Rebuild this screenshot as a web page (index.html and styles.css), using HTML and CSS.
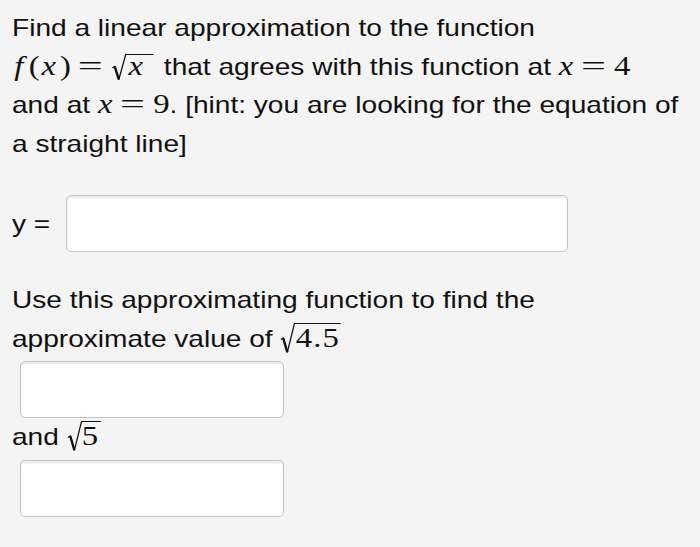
FILE: index.html
```html
<!DOCTYPE html>
<html>
<head>
<meta charset="utf-8">
<link rel="stylesheet" href="styles.css">
</head>
<body>
<div class="page">
  <p class="text q1">Find a linear approximation to the function<br>
    <span class="m"><i class="fn">f</i><span class="p">(</span><i>x</i><span class="p">)</span><span class="eq">=</span><span class="sqrt sq-small"><svg class="rad" width="13" height="27" viewBox="0 0 13 27"><path d="M0.8 15 L2.8 13.5 L6.3 26.5 L12.4 0.7" fill="none" stroke="#111" stroke-width="1.1"/><path d="M2.8 13.5 L6.3 26.5" stroke="#111" stroke-width="2"/></svg><span class="rc"><i>x</i></span></span></span> that agrees with this function at <span class="m"><i>x</i><span class="eq">=</span>4</span><br>
    and at <span class="m"><i>x</i><span class="eq">=</span>9</span>. [hint: you are looking for the equation of<br>
    a straight line]</p>

  <div class="row">
    <span class="text label">y =</span>
    <div class="box wide"></div>
  </div>

  <p class="text q2">Use this approximating function to find the<br>
    approximate value of <span class="m"><span class="sqrt"><svg class="rad" width="13" height="30" viewBox="0 0 13 30"><path d="M0.8 16.5 L2.8 15 L6.3 29.3 L12.4 0.7" fill="none" stroke="#111" stroke-width="1.1"/><path d="M2.8 15 L6.3 29.3" stroke="#111" stroke-width="2"/></svg><span class="rc">4.5</span></span></span></p>
  <div class="box small"></div>

  <p class="text q3">and <span class="m"><span class="sqrt"><svg class="rad" width="13" height="30" viewBox="0 0 13 30"><path d="M0.8 16.5 L2.8 15 L6.3 29.3 L12.4 0.7" fill="none" stroke="#111" stroke-width="1.1"/><path d="M2.8 15 L6.3 29.3" stroke="#111" stroke-width="2"/></svg><span class="rc">5</span></span></span></p>
  <div class="box small"></div>
</div>
</body>
</html>
```

FILE: styles.css
```css
html, body {
  margin: 0;
  padding: 0;
  background: #f4f4f4;
}

.page {
  padding: 9px 12px 0 12px;
  color: #111;
}

.text {
  font-family: "Liberation Sans", Arial, sans-serif;
  font-size: 24px;
  line-height: 38.5px;
  margin: 0;
  width: 580px;
  white-space: nowrap;
  transform: scaleX(1.17);
  transform-origin: 0 0;
}

.m {
  font-family: "Liberation Serif", "Times New Roman", serif;
  font-size: 28px;
  line-height: 1;
  white-space: nowrap;
}

.m i {
  font-style: italic;
  margin-right: 2px;
}

.m .fn {
  margin-left: 2px;
  margin-right: 3px;
}

.p {
  margin: 0 1.5px;
}

.eq {
  display: inline-block;
  transform: scaleX(1.35);
  margin: 0 10px 0 7px;
}

.sqrt {
  display: inline-block;
  white-space: nowrap;
}

.rad {
  display: inline-block;
  vertical-align: -6px;
  margin-right: -1px;
}

.rc {
  display: inline-block;
  border-top: 1.3px solid #111;
  padding: 0 1px 0 1px;
  line-height: 1;
  letter-spacing: 1px;
}

.sq-small {
  margin-right: 2px;
}

.sq-small .rad {
  vertical-align: -5px;
}

.sq-small .rc {
  line-height: 0.8;
  padding-left: 3px;
  padding-right: 7px;
  letter-spacing: 0;
}

.q1 {
  margin-bottom: 32px;
}

.row {
  display: flex;
  align-items: center;
}

.label {
  line-height: 1;
  width: 54px;
  flex: none;
}

.box {
  background: #fff;
  border: 1px solid #c4c4c4;
  border-radius: 5px;
  box-shadow: inset 0 2px 2px rgba(0, 0, 0, 0.09);
  box-sizing: border-box;
  height: 57px;
}

.wide {
  width: 502px;
}

.small {
  width: 264px;
  margin-left: 8px;
}

.q2 {
  margin-top: 29px;
  margin-bottom: 3px;
}

.q3 {
  margin-top: 0;
  margin-bottom: 3px;
}
```
